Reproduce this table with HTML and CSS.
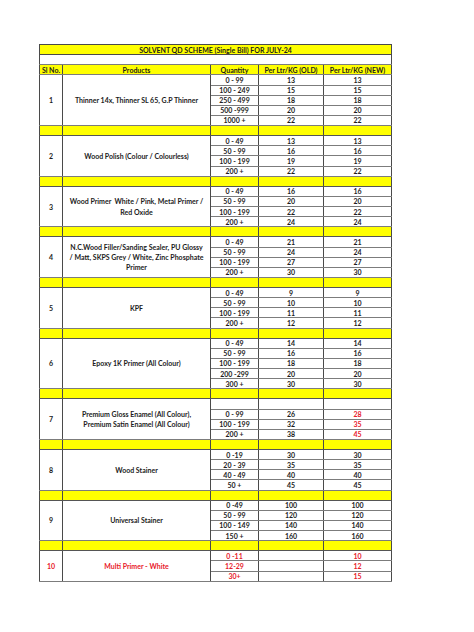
FILE: index.html
```html
<!DOCTYPE html>
<html>
<head>
<meta charset="utf-8">
<link rel="stylesheet" href="styles.css">
</head>
<body>
<table class="sheet">
<colgroup><col class="c-sl"><col class="c-prod"><col class="c-qty"><col class="c-old"><col class="c-new"></colgroup>
<tr class="title"><td colspan="5">SOLVENT QD SCHEME (Single Bill) FOR JULY-24</td></tr>
<tr class="blank"><td colspan="5"></td></tr>
<tr class="head"><td>Sl No.</td><td>Products</td><td>Quantity</td><td>Per Ltr/KG (OLD)</td><td>Per Ltr/KG (NEW)</td></tr>

<tr><td rowspan="5" class="sl">1</td><td rowspan="5" class="prod">Thinner 14x, Thinner SL 65, G.P Thinner</td><td>0 - 99</td><td>13</td><td>13</td></tr>
<tr><td>100 - 249</td><td>15</td><td>15</td></tr>
<tr><td>250 - 499</td><td>18</td><td>18</td></tr>
<tr><td>500 -999</td><td>20</td><td>20</td></tr>
<tr><td>1000 +</td><td>22</td><td>22</td></tr>
<tr class="sep"><td></td><td></td><td></td><td></td><td></td></tr>

<tr><td rowspan="4" class="sl">2</td><td rowspan="4" class="prod">Wood Polish (Colour / Colourless)</td><td>0 - 49</td><td>13</td><td>13</td></tr>
<tr><td>50 - 99</td><td>16</td><td>16</td></tr>
<tr><td>100 - 199</td><td>19</td><td>19</td></tr>
<tr><td>200 +</td><td>22</td><td>22</td></tr>
<tr class="sep"><td></td><td></td><td></td><td></td><td></td></tr>

<tr><td rowspan="4" class="sl">3</td><td rowspan="4" class="prod">Wood Primer&nbsp; White / Pink, Metal Primer /<br>Red Oxide</td><td>0 - 49</td><td>16</td><td>16</td></tr>
<tr><td>50 - 99</td><td>20</td><td>20</td></tr>
<tr><td>100 - 199</td><td>22</td><td>22</td></tr>
<tr><td>200 +</td><td>24</td><td>24</td></tr>
<tr class="sep"><td></td><td></td><td></td><td></td><td></td></tr>

<tr><td rowspan="4" class="sl">4</td><td rowspan="4" class="prod">N.C.Wood Filler/Sanding Sealer, PU Glossy<br>/ Matt, SKPS Grey / White, Zinc Phosphate<br>Primer</td><td>0 - 49</td><td>21</td><td>21</td></tr>
<tr><td>50 - 99</td><td>24</td><td>24</td></tr>
<tr><td>100 - 199</td><td>27</td><td>27</td></tr>
<tr><td>200 +</td><td>30</td><td>30</td></tr>
<tr class="sep"><td></td><td></td><td></td><td></td><td></td></tr>

<tr><td rowspan="4" class="sl">5</td><td rowspan="4" class="prod">KPF</td><td>0 - 49</td><td>9</td><td>9</td></tr>
<tr><td>50 - 99</td><td>10</td><td>10</td></tr>
<tr><td>100 - 199</td><td>11</td><td>11</td></tr>
<tr><td>200 +</td><td>12</td><td>12</td></tr>
<tr class="sep"><td></td><td></td><td></td><td></td><td></td></tr>

<tr><td rowspan="5" class="sl">6</td><td rowspan="5" class="prod">Epoxy 1K Primer (All Colour)</td><td>0 - 49</td><td>14</td><td>14</td></tr>
<tr><td>50 - 99</td><td>16</td><td>16</td></tr>
<tr><td>100 - 199</td><td>18</td><td>18</td></tr>
<tr><td>200 -299</td><td>20</td><td>20</td></tr>
<tr><td>300 +</td><td>30</td><td>30</td></tr>
<tr class="sep"><td></td><td></td><td></td><td></td><td></td></tr>

<tr><td rowspan="4" class="sl">7</td><td rowspan="4" class="prod">Premium Gloss Enamel (All Colour),<br>Premium Satin Enamel (All Colour)</td><td></td><td></td><td></td></tr>
<tr><td>0 - 99</td><td>26</td><td class="red">28</td></tr>
<tr><td>100 - 199</td><td>32</td><td class="red">35</td></tr>
<tr><td>200 +</td><td>38</td><td class="red">45</td></tr>
<tr class="sep"><td></td><td></td><td></td><td></td><td></td></tr>

<tr><td rowspan="4" class="sl">8</td><td rowspan="4" class="prod">Wood Stainer</td><td>0 -19</td><td>30</td><td>30</td></tr>
<tr><td>20 - 39</td><td>35</td><td>35</td></tr>
<tr><td>40 - 49</td><td>40</td><td>40</td></tr>
<tr><td>50 +</td><td>45</td><td>45</td></tr>
<tr class="sep"><td></td><td></td><td></td><td></td><td></td></tr>

<tr><td rowspan="4" class="sl">9</td><td rowspan="4" class="prod">Universal Stainer</td><td>0 -49</td><td>100</td><td>100</td></tr>
<tr><td>50 - 99</td><td>120</td><td>120</td></tr>
<tr><td>100 - 149</td><td>140</td><td>140</td></tr>
<tr><td>150 +</td><td>160</td><td>160</td></tr>
<tr class="sep"><td></td><td></td><td></td><td></td><td></td></tr>

<tr><td rowspan="3" class="sl red">10</td><td rowspan="3" class="prod red">Multi Primer - White</td><td class="red">0 -11</td><td></td><td class="red">10</td></tr>
<tr><td class="red">12-29</td><td></td><td class="red">12</td></tr>
<tr><td class="red">30+</td><td></td><td class="red">15</td></tr>
</table>
</body>
</html>
```
FILE: styles.css
```css
html, body {
  margin: 0;
  padding: 0;
  background: #ffffff;
}
body {
  padding: 44px 0 0 39px;
}
.sheet {
  border-collapse: collapse;
  table-layout: fixed;
  width: 352px;
  font-family: "Lato", "Liberation Sans", sans-serif;
  font-weight: 700;
  font-size: 7px;
  color: #1c1c1c;
  border: 1px solid #4a4a4a;
}
.c-sl { width: 23px; }
.c-prod { width: 148px; }
.c-qty { width: 48px; }
.c-old { width: 65px; }
.c-new { width: 68px; }
.sheet tr {
  height: 10.13px;
}
.sheet td {
  padding: 0;
  text-align: center;
  vertical-align: middle;
  line-height: 8px;
  white-space: nowrap;
  border-top: 1px solid #7c7c7c;
  border-bottom: 1px solid #7c7c7c;
  border-left: 1px solid #4a4a4a;
  border-right: 1px solid #4a4a4a;
}
.sheet .prod {
  line-height: 10.3px;
}
.title td, .head td, .sep td {
  background: #ffff00;
}
.title td {
  border-color: #4a4a4a;
}
.sep td {
  border-top-color: #555555;
  border-bottom-color: #555555;
}
.sheet .red {
  color: #e8202a;
}
```
